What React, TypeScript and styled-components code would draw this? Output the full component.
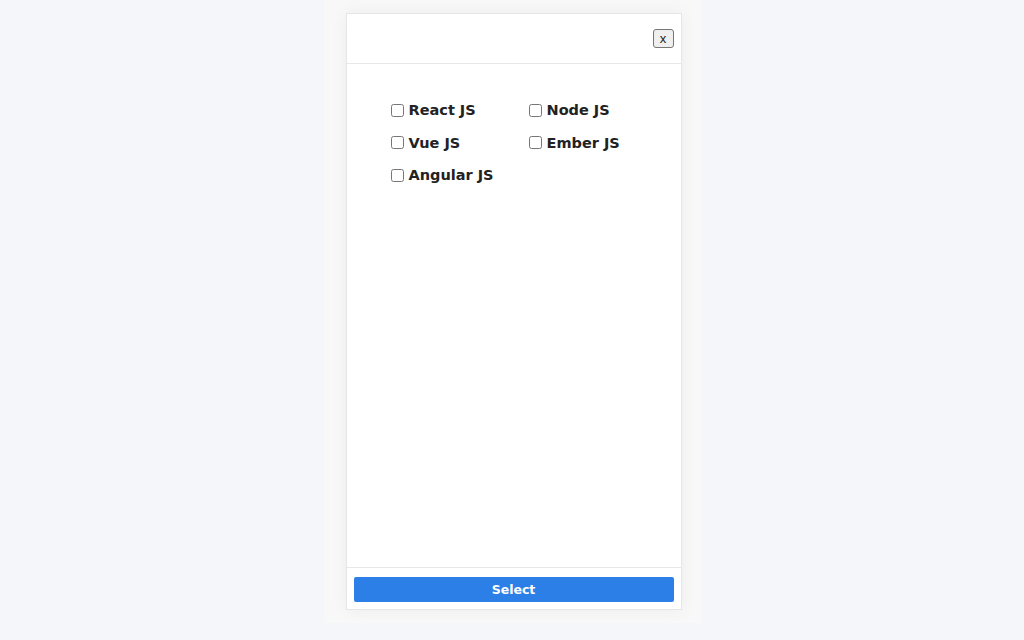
import styled, { createGlobalStyle } from "styled-components";

const GlobalStyle = createGlobalStyle`
  html, body {
    margin: 0;
    padding: 0;
    background: #f5f6fa;
    font-family: "Liberation Sans", Arial, sans-serif;
  }
`;

const Page = styled.div`
  display: flex;
  justify-content: center;
  height: 640px;
`;

const Backdrop = styled.div`
  width: 377px;
  height: 623px;
  background: #f8f8f8;
  padding: 13px 0 0 22px;
  box-sizing: border-box;
  display: flex;
  justify-content: flex-start;
`;

const Modal = styled.div`
  width: 336px;
  height: 597px;
  background: #fff;
  border: 1px solid #e6e6e6;
  box-sizing: border-box;
  box-shadow: 0 0 16px rgba(0, 0, 0, 0.05);
  display: flex;
  flex-direction: column;
`;

const Header = styled.div`
  height: 50px;
  flex-shrink: 0;
  border-bottom: 1px solid #e8e8e8;
  box-sizing: border-box;
  display: flex;
  align-items: flex-start;
  justify-content: flex-end;
  padding: 15px 7px 0 0;
`;

const CloseButton = styled.button`
  width: 21px;
  height: 19px;
  padding: 0;
  font-family: "Liberation Sans", Arial, sans-serif;
  font-size: 13px;
  line-height: 1;
  color: #222;
  background: #efefef;
  border: 1px solid #767676;
  border-radius: 3px;
`;

const Body = styled.div`
  flex: 1;
  padding: 30px 0 0 40px;
`;

const Options = styled.div`
  display: grid;
  grid-template-columns: 138px 138px;
`;

const Option = styled.label`
  display: flex;
  align-items: center;
  height: 32.5px;
  font-family: "DejaVu Sans", sans-serif;
  font-weight: 700;
  font-size: 14.5px;
  color: #222;
  gap: 2px;

  input {
    width: 13px;
    height: 13px;
    margin: 0 3px 0 4px;
  }
`;

const Footer = styled.div`
  flex-shrink: 0;
  border-top: 1px solid #e8e8e8;
  padding: 9px 7px 7px 7px;
`;

const SelectButton = styled.button`
  width: 100%;
  height: 25px;
  background: #2d7fe8;
  color: #fff;
  border: none;
  border-radius: 2px;
  font-family: "DejaVu Sans", sans-serif;
  font-weight: 700;
  font-size: 12.5px;
`;

const frameworks = ["React JS", "Node JS", "Vue JS", "Ember JS", "Angular JS"];

const App = () => {
  return (
    <>
      <GlobalStyle />
      <Page>
        <Backdrop>
          <Modal>
            <Header>
              <CloseButton type="button">x</CloseButton>
            </Header>
            <Body>
              <Options>
                {frameworks.map((name) => (
                  <Option key={name}>
                    <input type="checkbox" value={name} />
                    {name}
                  </Option>
                ))}
              </Options>
            </Body>
            <Footer>
              <SelectButton type="button">Select</SelectButton>
            </Footer>
          </Modal>
        </Backdrop>
      </Page>
    </>
  );
};

export default App;
